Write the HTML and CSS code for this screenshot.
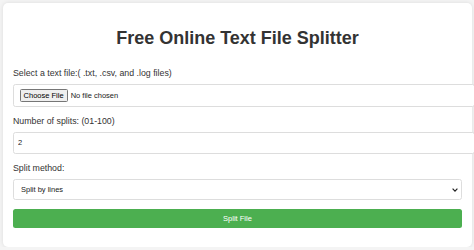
FILE: index.html
```html
<!DOCTYPE html>
<html lang="en">
<head>
<meta charset="utf-8">
<title>Free Online Text File Splitter</title>
<link rel="stylesheet" href="styles.css">
</head>
<body>
<div class="card">
  <h1 class="title">Free Online Text File Splitter</h1>
  <form class="form">
    <div class="field">
      <label class="label" for="file">Select a text file:( .txt, .csv, and .log files)</label>
      <input class="text-input file-input" type="file" id="file" accept=".txt,.csv,.log">
    </div>
    <div class="field">
      <label class="label" for="splits">Number of splits: (01-100)</label>
      <input class="text-input" type="number" id="splits" min="1" max="100" value="2">
    </div>
    <div class="field">
      <label class="label" for="method">Split method:</label>
      <div class="select-wrap">
        <select class="select" id="method">
          <option>Split by lines</option>
          <option>Split by size</option>
        </select>
        <svg class="chevron" width="6" height="4" viewBox="0 0 6 4" aria-hidden="true">
          <path d="M0.6 0.7 L3 3.1 L5.4 0.7" fill="none" stroke="#222" stroke-width="1.2"/>
        </svg>
      </div>
    </div>
    <button class="submit" type="button">Split File</button>
  </form>
</div>
</body>
</html>
```
FILE: styles.css
```css
html, body {
  overflow: hidden;
}
body {
  margin: 0;
  padding: 3px 2px 0 3px;
  background: #f4f4f4;
  font-family: "Liberation Sans", Arial, sans-serif;
  color: #333;
}
.card {
  display: flex;
  flex-direction: column;
  background: #fff;
  border-radius: 5px;
  box-shadow: 0 0 4px rgba(0, 0, 0, 0.1);
  padding: 10px 10px 19px;
}
.title {
  margin: 15.4px 0 18.9px;
  font-size: 18px;
  font-weight: bold;
  text-align: center;
  color: #333;
  line-height: normal;
}
.form {
  display: flex;
  flex-direction: column;
  gap: 9.5px;
  margin: 0;
}
.field {
  display: flex;
  flex-direction: column;
  align-items: stretch;
  gap: 5.5px;
}
.label {
  display: block;
  font-size: 8.8px;
  color: #333;
}
.text-input {
  width: 100%;
  padding: 5.4px 7px 5.4px 4px;
  border: 1px solid #ddd;
  border-radius: 2.5px;
  font-family: "Liberation Sans", Arial, sans-serif;
  font-size: 7.5px;
  color: #222;
  background: #fff;
  margin: 0;
}
.file-input {
  padding: 4px 5.6px;
  line-height: normal;
}
.file-input::file-selector-button {
  font-family: "Liberation Sans", Arial, sans-serif;
  font-size: 7.5px;
  padding: 1px 3px;
  margin-right: 3px;
  border: 1px solid #767676;
  border-radius: 1.5px;
  background: #efefef;
  color: #000;
}
.select-wrap {
  position: relative;
  display: flex;
}
.select {
  flex: 1;
  appearance: none;
  -webkit-appearance: none;
  height: 21px;
  padding: 0 16px 0 7px;
  border: 1px solid #ddd;
  border-radius: 2.5px;
  font-family: "Liberation Sans", Arial, sans-serif;
  font-size: 7.5px;
  color: #222;
  background: #fff;
  margin: 0;
}
.chevron {
  position: absolute;
  right: 4px;
  top: 9px;
  pointer-events: none;
}
.submit {
  width: 100%;
  height: 19px;
  padding: 0 5px;
  margin-top: -0.5px;
  border: none;
  border-radius: 2.5px;
  background: #4caf50;
  color: #fff;
  font-family: "Liberation Sans", Arial, sans-serif;
  font-size: 7.5px;
  cursor: pointer;
}
```
